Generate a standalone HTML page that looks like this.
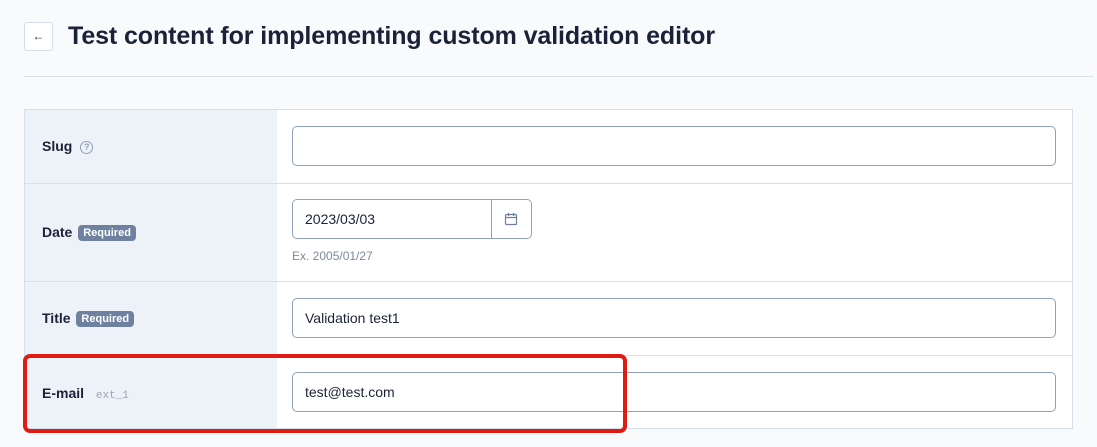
<!DOCTYPE html>
<html><head><style>
*{box-sizing:border-box;margin:0;padding:0}
body{width:1097px;height:447px;background:#f8fafc;font-family:"Liberation Sans",sans-serif;position:relative;overflow:hidden;color:#1a2236}
.back{position:absolute;left:24px;top:22px;width:29px;height:29px;border:1px solid #d5dde8;border-radius:3px;background:#fff;font-size:12px;text-align:center;line-height:26px;color:#333}
h1{position:absolute;left:68px;top:22px;font-size:25px;font-weight:bold;color:#1b2238;letter-spacing:-0.1px}
.sep{position:absolute;left:24px;top:76px;width:1069px;height:1px;background:#d5e0ec}
.tbl{position:absolute;left:24px;top:109px;width:1049px;border:1px solid #d5e0ec;background:#fff}
.row{position:relative;border-top:1px solid #d5e0ec}
.row:first-child{border-top:none}
.lab{position:absolute;left:0;top:0;bottom:0;width:252px;background:#edf2f8}
.lt{position:absolute;left:17px;font-size:14px;font-weight:bold;color:#1b2238}
.badge{display:inline-block;background:#6f81a0;color:#fff;font-size:11px;font-weight:bold;border-radius:4px;padding:2px 5px;margin-left:2px;vertical-align:1px}
.inp{position:absolute;left:267px;width:764px;height:40px;border:1px solid #8fa1bd;border-radius:5px;font-size:14px;padding-left:12px;line-height:38px;color:#1b2238}
.red{position:absolute;left:23px;top:354px;width:604px;height:79px;border:4px solid #e01b14;border-radius:7px}
</style></head><body>
<div class="back">&#8592;</div>
<h1>Test content for implementing custom validation editor</h1>
<div class="sep"></div>
<div class="tbl">
 <div class="row" style="height:73px"><div class="lab"><span class="lt" style="top:28px">Slug <span style="display:inline-block;width:13px;height:13px;border:1px solid #8fa1bd;border-radius:50%;font-size:9px;color:#8fa1bd;text-align:center;line-height:11px;margin-left:4px;vertical-align:1px">?</span></span></div><div class="inp" style="top:16px"></div></div>
 <div class="row" style="height:98px"><div class="lab"><span class="lt" style="top:40px">Date <span class="badge">Required</span></span></div>
  <div class="inp" style="top:15px;width:240px">2023/03/03<span style="position:absolute;left:198px;top:0;width:1px;height:38px;background:#8fa1bd"></span><svg style="position:absolute;left:211px;top:12px" width="14" height="14" viewBox="0 0 14 14" fill="none" stroke="#6f7f99" stroke-width="1.2"><rect x="1.5" y="2.5" width="11" height="10" rx="1"/><path d="M1.5 5.5h11M4.5 1v3M9.5 1v3"/></svg></div>
  <div style="position:absolute;left:267px;top:65px;font-size:12px;color:#7d8aa0">Ex. 2005/01/27</div></div>
 <div class="row" style="height:74px"><div class="lab"><span class="lt" style="top:28px">Title <span class="badge">Required</span></span></div><div class="inp" style="top:16px">Validation test1</div></div>
 <div class="row" style="height:73px"><div class="lab"><span class="lt" style="top:29px">E-mail <span style="font-family:'Liberation Mono',monospace;font-weight:normal;font-size:11px;color:#9aa7bb;margin-left:8px">ext_1</span></span></div><div class="inp" style="top:16px">test@test.com</div></div>
</div>
<div class="red"></div>
</body></html>
